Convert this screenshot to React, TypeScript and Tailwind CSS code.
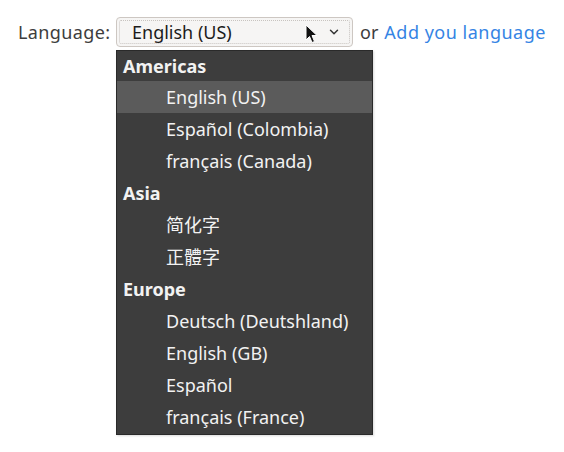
import { ChevronDown } from "lucide-react"

const groups = [
  { name: "Americas", items: ["English (US)", "Español (Colombia)", "français (Canada)"] },
  { name: "Asia", items: ["简化字", "正體字"] },
  { name: "Europe", items: ["Deutsch (Deutshland)", "English (GB)", "Español", "français (France)"] },
]

function Cursor() {
  return (
    <svg width="14" height="20" viewBox="0 0 14 20" className="absolute left-[189px] top-[7px]">
      <path d="M1 1 L1 16 L4.5 12.5 L7 18.5 L9.5 17.5 L7 11.5 L12 11.5 Z" fill="#111" stroke="#fff" strokeWidth="1" strokeLinejoin="round" />
    </svg>
  )
}

export default function App() {
  return (
    <div className="min-h-screen bg-white pl-[18px] pt-[17px] text-[18px] text-[#3d3d3d] font-['Noto_Sans','Noto_Sans_CJK_SC',sans-serif]">
      <div className="flex items-center">
        <span className="w-[98px] tracking-[0.4px]">Language:</span>
        <div className="relative">
          <div className="flex h-[30px] w-[237px] items-center rounded-[4px] border border-[#cdc7c2] bg-[#f6f5f4] p-[2px]">
            <div className="flex h-full w-full items-center justify-between rounded-[2px] border border-dotted border-[#c8c4c0] pl-[12px] pr-[8px] text-[#1c1c1c]">
              <span>English (US)</span>
              <ChevronDown size={14} strokeWidth={2.5} className="text-[#333]" />
            </div>
          </div>
          <Cursor />
          <div className="absolute left-0 top-[33px] w-[257px] border border-[#2a2a2a] bg-[#3d3d3d] pb-[1px] text-[#f2f2f2] shadow-[1px_1px_2px_rgba(0,0,0,0.15)]">
            {groups.map((g, i) => (
              <div key={g.name}>
                <div className={`flex items-center pl-[6px] font-bold ${i === 0 ? "h-[30px]" : "h-[32px]"}`}>{g.name}</div>
                {g.items.map((item) => (
                  <div
                    key={item}
                    className={`flex h-[32px] items-center pl-[49px] ${item === "English (US)" ? "bg-[#5b5b5b]" : ""}`}
                  >
                    {item}
                  </div>
                ))}
              </div>
            ))}
          </div>
        </div>
        <span className="ml-[7px]">or</span>
        <a className="ml-[6px] tracking-[0.5px] text-[#3584e4]" href="#">
          Add you language
        </a>
      </div>
    </div>
  )
}
